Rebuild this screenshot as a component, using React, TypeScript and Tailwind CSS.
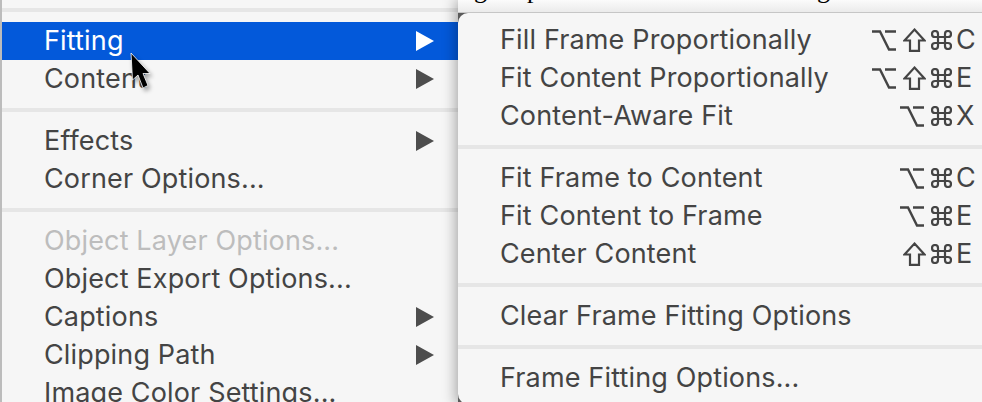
const font = "font-['Inter','Liberation_Sans',sans-serif]";

type Row = { label: string; arrow?: boolean; active?: boolean; disabled?: boolean; mods?: string; letter?: string } | 'sep';

const leftRows: Row[] = [
  { label: 'Fitting', arrow: true, active: true },
  { label: 'Content', arrow: true },
  'sep',
  { label: 'Effects', arrow: true },
  { label: 'Corner Options...' },
  'sep',
  { label: 'Object Layer Options...', disabled: true },
  { label: 'Object Export Options...' },
  { label: 'Captions', arrow: true },
  { label: 'Clipping Path', arrow: true },
  { label: 'Image Color Settings...' },
];

const rightRows: Row[] = [
  { label: 'Fill Frame Proportionally', mods: 'osc', letter: 'C' },
  { label: 'Fit Content Proportionally', mods: 'osc', letter: 'E' },
  { label: 'Content-Aware Fit', mods: 'oc', letter: 'X' },
  'sep',
  { label: 'Fit Frame to Content', mods: 'oc', letter: 'C' },
  { label: 'Fit Content to Frame', mods: 'oc', letter: 'E' },
  { label: 'Center Content', mods: 'sc', letter: 'E' },
  'sep',
  { label: 'Clear Frame Fitting Options' },
  'sep',
  { label: 'Frame Fitting Options...' },
];

function Arrow({ active }: { active?: boolean }) {
  return (
    <svg width="18" height="20" viewBox="0 0 18 20" className={active ? 'fill-white' : 'fill-[#4d4d4d]'}>
      <path d="M0 0 L18 10 L0 20 Z" />
    </svg>
  );
}

// modifier key symbols
function OptionKey() {
  return (
    <svg width="24" height="22" viewBox="0 0 24 22" fill="none" stroke="#444444" strokeWidth="2.4" className="mr-[7px]">
      <path d="M0 2.5 H8 L17 20.5 H24 M13 2.5 H24" />
    </svg>
  );
}

function ShiftKey() {
  return (
    <svg width="23" height="24" viewBox="0 0 23 24" fill="none" stroke="#444444" strokeWidth="2.2" className="mr-[5px]">
      <path d="M11.5 1.6 L21.5 12.5 H16 V22.8 H7 V12.5 H1.5 Z" strokeLinejoin="miter" />
    </svg>
  );
}

function CommandKey() {
  return (
    <svg width="21" height="20" viewBox="0 0 21 20" fill="none" stroke="#444444" strokeWidth="2.2" className="mr-[4px]">
      <path d="M7 7 H14 V13 H7 Z M7 7 H4 A3 3 0 1 1 7 4 Z M14 7 V4 A3 3 0 1 1 17 7 Z M14 13 H17 A3 3 0 1 1 14 16 Z M7 13 V16 A3 3 0 1 1 4 13 Z" />
    </svg>
  );
}

function Separator() {
  return <div className="my-[10px] h-[4px] bg-[#e6e6e6]" />;
}

function LeftItem({ row }: { row: Exclude<Row, 'sep'> }) {
  const color = row.active ? 'bg-[#0359da] text-white' : row.disabled ? 'text-[#bdbdbd]' : 'text-[#444444]';
  return (
    <div className={`flex h-[38px] items-center justify-between pl-[42px] pr-[24px] text-[27px] leading-none tracking-[0.15px] ${color}`}>
      <span className="mb-[2px]">{row.label}</span>
      {row.arrow && <Arrow active={row.active} />}
    </div>
  );
}

function RightItem({ row }: { row: Exclude<Row, 'sep'> }) {
  return (
    <div className="flex h-[38px] items-center justify-between pl-[42px] pr-[6px] text-[27px] leading-none tracking-[0.15px] text-[#444444]">
      <span className="mb-[2px]">{row.label}</span>
      {row.letter && (
        <span className="flex items-center">
          {row.mods?.includes('o') && <OptionKey />}
          {row.mods?.includes('s') && <ShiftKey />}
          {row.mods?.includes('c') && <CommandKey />}
          <span className="mb-[2px] w-[20px]">{row.letter}</span>
        </span>
      )}
    </div>
  );
}

export default function App() {
  return (
    <div className={`relative flex h-[402px] w-[982px] overflow-hidden bg-white ${font}`}>
      {/* main context menu */}
      <div className="w-[458px] shrink-0 border-l-2 border-[#bcbcbc] bg-[#f6f6f6] pt-[8px]">
        <div className="mb-[10px] h-[4px] bg-[#e6e6e6]" />
        {leftRows.map((row, i) => (row === 'sep' ? <Separator key={i} /> : <LeftItem key={i} row={row} />))}
      </div>

      <div className="h-[404px] flex-1 bg-[#5a5a5a] shadow-[-3px_0_12px_rgba(0,0,0,0.3)]">
        {/* document text peeking out behind the submenu */}
        <div className="flex h-[13px] items-end overflow-hidden border-b border-[#c6c6c6] bg-gradient-to-b from-[#fbfbfb] to-[#ebebeb]">
          <div className="mb-[9px] flex font-['Liberation_Serif',serif] text-[26px] leading-[26px] text-black">
            <span className="ml-[16px]">g</span>
            <span className="ml-[40px]">p</span>
            <span className="ml-[277px]">g</span>
          </div>
        </div>
        {/* submenu */}
        <div className="h-[391px] rounded-l-[10px] bg-[#f6f6f6] pt-[8px]">
          {rightRows.map((row, i) => (row === 'sep' ? <Separator key={i} /> : <RightItem key={i} row={row} />))}
        </div>
      </div>

      {/* mouse pointer */}
      <svg className="absolute left-[128px] top-[50px] drop-shadow-[2px_3px_2px_rgba(0,0,0,0.35)]" width="28" height="44" viewBox="0 0 28 44">
        <path d="M3 3 L4.5 30 L10 25 L15 38 L20 35.5 L15 23.5 L22 23.5 Z" fill="#000" stroke="#fff" strokeWidth="0.8" />
      </svg>
    </div>
  );
}
